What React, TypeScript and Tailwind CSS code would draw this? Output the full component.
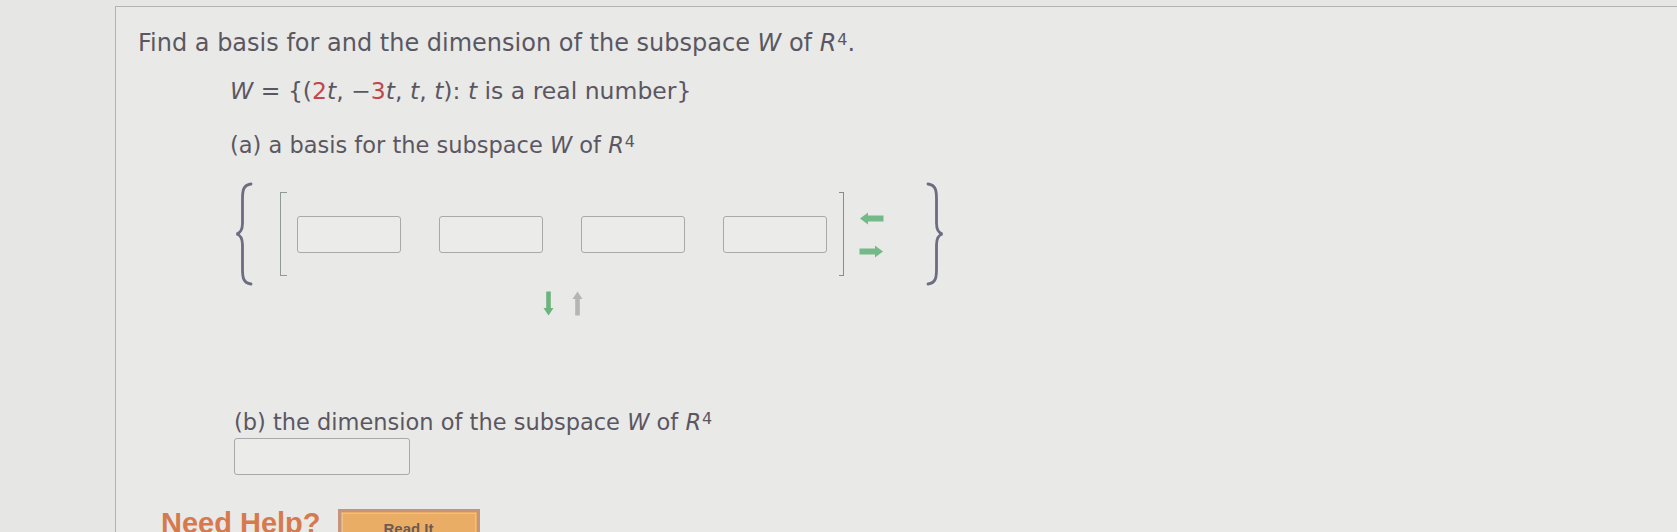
import React from "react";

// Question panel: basis + dimension of a subspace of R^4

const textFont = { fontFamily: '"DejaVu Sans", Verdana, sans-serif' };
const helpFont = { fontFamily: '"Liberation Sans", Arial, sans-serif' };

function Sup4() {
  return <sup className="text-[16px] relative -top-[6px] ml-[1px]">4</sup>;
}

function Var({ children }: { children: React.ReactNode }) {
  return <span className="italic">{children}</span>;
}

function Brace({ flip = false }: { flip?: boolean }) {
  return (
    <svg width="20" height="104" viewBox="0 0 20 104" className={flip ? "-scale-x-100" : ""}>
      <path
        d="M17 2 C9 3 8.5 9 8.5 17 L8.5 41 C8.5 48 6.5 51 2.5 52 C6.5 53 8.5 56 8.5 63 L8.5 87 C8.5 95 9 101 17 102"
        fill="none"
        stroke="#6c6c82"
        strokeWidth="2.8"
        strokeLinecap="round"
      />
    </svg>
  );
}

function Box({ w = "w-[104px]" }: { w?: string }) {
  return <div className={`${w} h-[37px] border-[1.5px] border-[#a9a9a9] rounded-[3px] bg-[#ebebe9]`} />;
}

function HArrow({ dir }: { dir: "left" | "right" }) {
  return (
    <svg width="25" height="13" viewBox="0 0 25 13" className={dir === "right" ? "-scale-x-100" : ""}>
      <path d="M1 6.5 L9 0.5 L9 3.5 L24.5 3.5 L24.5 9.5 L9 9.5 L9 12.5 Z" fill="#74b988" />
    </svg>
  );
}

function VArrow({ dir, color }: { dir: "up" | "down"; color: string }) {
  return (
    <svg width="11" height="25" viewBox="0 0 11 25" className={dir === "down" ? "-scale-y-100" : ""}>
      <path d="M5.5 0.5 L10.5 8 L7.8 8 L7.8 24.5 L3.2 24.5 L3.2 8 L0.5 8 Z" fill={color} />
    </svg>
  );
}

export default function App() {
  return (
    <div className="w-[1677px] h-[532px] overflow-hidden bg-[#e6e6e4] pt-[6px]" style={textFont}>
      <div className="ml-[115px] h-[526px] border-l-[1.5px] border-t-[1.5px] border-[#b3b3b3] bg-[#e9e9e7] pl-[22px] pt-[21px] text-[#5b5762]">
        <div className="text-[24px] leading-[30px]">
          Find a basis for and the dimension of the subspace <Var>W</Var> of <Var>R</Var>
          <Sup4 />.
        </div>

        <div className="pl-[92px] mt-[18px] text-[23.5px] leading-[30px]">
          <Var>W</Var> = {"{"}(<span className="text-[#c0484a]">2</span>
          <Var>t</Var>, −<span className="text-[#c0484a]">3</span>
          <Var>t</Var>, <Var>t</Var>, <Var>t</Var>): <Var>t</Var> is a real number{"}"}
        </div>

        <div className="pl-[92px] mt-[24px] text-[22.5px] leading-[30px]">
          (a) a basis for the subspace <Var>W</Var> of <Var>R</Var>
          <Sup4 />
        </div>

        {/* vector entry */}
        <div className="pl-[96px] mt-[22px] h-[104px] flex items-center">
          <Brace />
          <div className="ml-[26px] w-[7px] h-[84px] border-l-[1.5px] border-t-[1.5px] border-b-[1.5px] border-[#8c9c92]" />
          <div className="flex gap-[38px] ml-[10px]">
            <Box />
            <Box />
            <Box />
            <Box />
          </div>
          <div className="ml-[12px] w-[5px] h-[84px] border-r-[1.5px] border-t-[1.5px] border-b-[1.5px] border-[#8a8a94]" />
          <div className="ml-[15px] flex flex-col gap-[20px] pt-[2px]">
            <HArrow dir="left" />
            <HArrow dir="right" />
          </div>
          <div className="ml-[41px]">
            <Brace flip />
          </div>
        </div>

        <div className="pl-[405px] mt-[5px] flex gap-[18px]">
          <VArrow dir="down" color="#6cb47e" />
          <VArrow dir="up" color="#b5b5b5" />
        </div>

        <div className="pl-[96px] mt-[91px] text-[22.5px] leading-[30px]">
          (b) the dimension of the subspace <Var>W</Var> of <Var>R</Var>
          <Sup4 />
        </div>
        <div className="pl-[96px] mt-[1px]">
          <Box w="w-[176px]" />
        </div>

        <div className="pl-[23px] mt-[31px] flex items-start gap-[17px]">
          <div className="text-[29px] font-bold text-[#d67a4e] leading-[34px]" style={helpFont}>
            Need Help?
          </div>
          <div className="mt-[3px] w-[142px] h-[40px] border-[3px] border-[#c5947c] bg-[#eaad66] p-[1px]">
            <div className="h-full border-[1px] border-[#f0c08a] flex justify-center pt-[6px]">
              <span className="text-[15px] font-bold text-[#6a5b54] leading-[18px]" style={helpFont}>
                Read It
              </span>
            </div>
          </div>
        </div>
      </div>
    </div>
  );
}
